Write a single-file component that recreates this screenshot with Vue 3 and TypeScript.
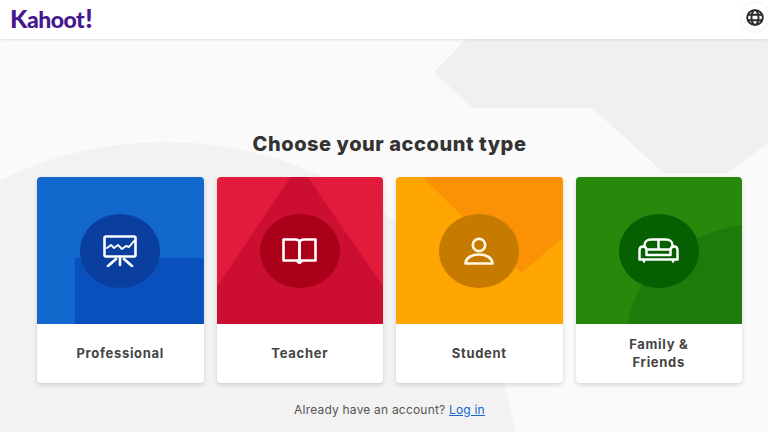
<script setup lang="ts">
interface Account {
  label: string[];
  tone: string;
}
const accounts: Account[] = [
  { label: ['Professional'], tone: 'pro' },
  { label: ['Teacher'], tone: 'teacher' },
  { label: ['Student'], tone: 'student' },
  { label: ['Family &', 'Friends'], tone: 'family' },
];
</script>

<template>
  <div class="page">
    <svg class="backdrop" width="768" height="432" viewBox="0 0 768 432" aria-hidden="true">
      <ellipse cx="165" cy="470" rx="352" ry="328" fill="#f2f2f2" />
      <path d="M466 39 L434 72 L472 108 L592 108 L664 173 L727 173 L768 143 L768 39 Z" fill="#f0f0f0" />
    </svg>

    <header class="topbar">
      <span class="logo"><span class="cap">K</span>ahoot<span class="bang">!</span></span>
      <button class="globe" type="button" aria-label="Language">
        <svg width="18" height="17" viewBox="0 0 18 17" fill="none" stroke="#2b2b2b" stroke-width="1.9">
          <ellipse cx="9" cy="8.500" rx="7.800" ry="7.400" />
          <ellipse cx="9" cy="8.500" rx="3.500" ry="7.400" />
          <path d="M1.500 5.800H16.500M1.500 11.200H16.500" />
        </svg>
      </button>
    </header>

    <main class="content">
      <h1 class="title">Choose your account type</h1>
      <div class="cards">
        <article v-for="a in accounts" :key="a.tone" class="card">
          <div class="art" :class="a.tone">
            <svg class="shape" viewBox="0 0 167 147" preserveAspectRatio="none" aria-hidden="true">
              <path v-if="a.tone === 'pro'" d="M38 147V81H167V147Z" fill="#0a50bd" />
              <path v-else-if="a.tone === 'teacher'" d="M74 0 H91 L167 110 V147 H0 V110 Z" fill="#cd0e33" />
              <path v-else-if="a.tone === 'student'" d="M26 0 H167 V61 L126 96 Z" fill="#fb9206" />
              <path v-else d="M52 147 C60 100 95 60 167 48 V147Z" fill="#1d7a0b" />
            </svg>
            <div class="disc">
              <svg v-if="a.tone === 'pro'" width="34" height="32" viewBox="0 0 34 32" fill="none" stroke="#fff" stroke-width="2.600" stroke-linejoin="round" stroke-linecap="round">
                <rect x="1.500" y="1.500" width="31" height="20" rx="1.500" />
                <path d="M4 13 L8 10 L11 13 L15 10 L19 14 L23 11 L26 12 L31 6" stroke-width="1.900" />
                <path d="M17 22V30M13 24L5 31M21 24L29 31" />
              </svg>
              <svg v-else-if="a.tone === 'teacher'" width="35" height="26" viewBox="0 0 35 26" fill="none" stroke="#fff" stroke-width="2.600" stroke-linejoin="round">
                <path d="M1.500 1.500 H13 Q17.500 1.500 17.500 5 V22.500 H1.500 Z" />
                <path d="M33.500 1.500 H22 Q17.500 1.500 17.500 5 V22.500 H33.500 Z" />
                <path d="M15 23 L17.500 25 L20 23" />
              </svg>
              <svg v-else-if="a.tone === 'student'" width="30" height="28" viewBox="0 0 30 28" fill="none" stroke="#fff6e0" stroke-width="2.700" stroke-linejoin="round">
                <ellipse cx="15" cy="8" rx="6.200" ry="6.200" />
                <path d="M1.500 26.500 C2 20.500 8 17.500 15 17.500 C22 17.500 28 20.500 28.500 26.500 Z" />
              </svg>
              <svg v-else width="41" height="25" viewBox="0 0 41 25" fill="none" stroke="#fff" stroke-width="2.500" stroke-linejoin="round" stroke-linecap="round">
                <path d="M6.500 9 V7 C6.500 3.500 9.500 1.500 13 1.500 H28 C31.500 1.500 34.500 3.500 34.500 7 V9" />
                <path d="M20.500 1.500 V11.500 M10 11.500 H31" />
                <path d="M1.500 12.500 C1.500 10 3 8.500 5 8.500 C7.500 8.500 8.500 10.500 8.500 12.500 V17 H32.500 V12.500 C32.500 10.500 33.500 8.500 36 8.500 C38 8.500 39.500 10 39.500 12.500 V21.500 H1.500 Z" />
                <path d="M6 22 V23.500 M35 22 V23.500" />
              </svg>
            </div>
          </div>
          <div class="caption">
            <span v-for="line in a.label" :key="line">{{ line }}</span>
          </div>
        </article>
      </div>
      <p class="login">Already have an account? <a href="#" class="link">Log in</a></p>
    </main>
  </div>
</template>

<style scoped>
.page {
  position: relative;
  width: 768px;
  height: 432px;
  overflow: hidden;
  background: #fafafa;
  font-family: "Inter", "Liberation Sans", sans-serif;
  color: #333;
}
.backdrop {
  position: absolute;
  inset: 0;
}
.topbar {
  position: relative;
  height: 39px;
  display: flex;
  align-items: center;
  justify-content: space-between;
  padding: 0 0 0 10px;
  background: #fff;
  box-shadow: 0 1px 3px rgba(0, 0, 0, 0.1);
}
.logo {
  font-family: "Lato", sans-serif;
  font-weight: 900;
  font-size: 23px;
  line-height: 28px;
  letter-spacing: -0.5px;
  color: #46178f;
  margin-top: -3px;
}
.cap {
  font-size: 25px;
}
.bang {
  margin-left: 1px;
  font-size: 26px;
}
.globe {
  width: 26px;
  height: 28px;
  margin-top: -5px;
  padding: 0;
  border: none;
  border-radius: 50%;
  background: #fff;
  box-shadow: 0 0 5px rgba(0, 0, 0, 0.08);
  display: flex;
  align-items: center;
  justify-content: center;
}
.content {
  position: relative;
  display: flex;
  flex-direction: column;
  align-items: center;
  padding: 92px 0 0 11px;
}
.title {
  margin: 0;
  font-size: 20px;
  line-height: 26px;
  font-weight: 800;
  letter-spacing: 0.55px;
  color: #333;
}
.cards {
  display: flex;
  gap: 13px;
  margin-top: 20px;
}
.card {
  width: 166.5px;
  height: 206px;
  border-radius: 4px;
  overflow: hidden;
  background: #fff;
  box-shadow: 0 2px 4px rgba(0, 0, 0, 0.15);
  display: flex;
  flex-direction: column;
}
.art {
  position: relative;
  height: 147px;
  display: flex;
  align-items: center;
  justify-content: center;
}
.shape {
  position: absolute;
  inset: 0;
  width: 100%;
  height: 100%;
}
.pro { background: #1368ce; }
.teacher { background: #e21b3c; }
.student { background: #ffa602; }
.family { background: #26890c; }
.disc {
  position: relative;
  width: 80px;
  height: 74px;
  border-radius: 50%;
  display: flex;
  align-items: center;
  justify-content: center;
}
.pro .disc { background: #0a3f9f; }
.teacher .disc { background: #ab0019; }
.student .disc { background: #c67a00; }
.family .disc { background: #065f00; }
.caption {
  flex: 1;
  display: flex;
  flex-direction: column;
  align-items: center;
  justify-content: center;
  padding-bottom: 2px;
  font-size: 13px;
  line-height: 18px;
  font-weight: 700;
  letter-spacing: 0.7px;
  color: #444;
}
.login {
  margin: 19px 0 0;
  font-size: 12px;
  line-height: 16px;
  letter-spacing: 0.2px;
  color: #555;
}
.link {
  color: #1368ce;
}
</style>
